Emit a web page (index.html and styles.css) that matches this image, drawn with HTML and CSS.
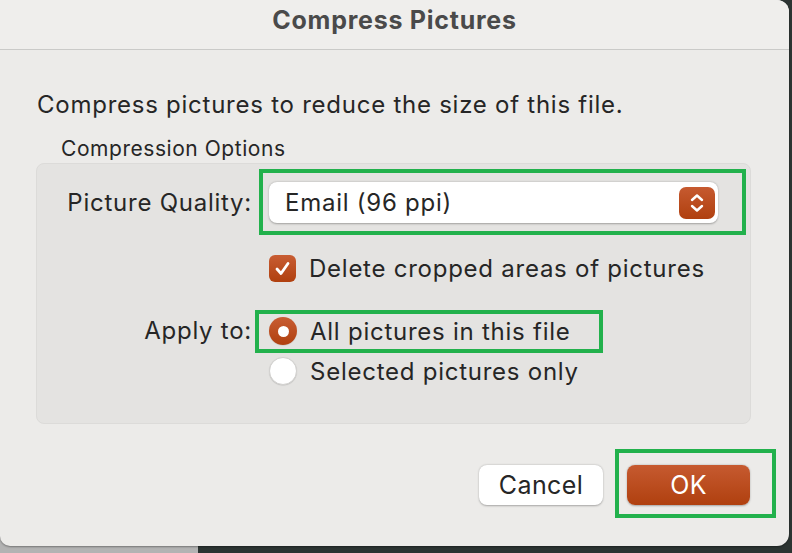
FILE: index.html
```html
<!DOCTYPE html>
<html lang="en">
<head>
  <meta charset="UTF-8" />
  <meta name="viewport" content="width=device-width,initial-scale=1.0"/>
  <title>Compress Pictures</title>
  <link rel="stylesheet" href="styles.css">
</head>
<body>
  <div class="window">
    <div class="titlebar">Compress Pictures</div>
    <div class="content">
      <p class="intro">Compress pictures to reduce the size of this file.</p>
      <div class="group-label">Compression Options</div>
      <div class="group">
        <div class="label">Picture Quality:</div>
        <div class="select mark mark-select">
          <span>Email (96 ppi)</span>
          <span class="stepper">
            <svg width="16" height="22" viewBox="0 0 16 22"><path d="M3 8 L8 3.5 L13 8 M3 14 L8 18.5 L13 14" fill="none" stroke="#fff" stroke-width="2.4" stroke-linecap="round" stroke-linejoin="round"/></svg>
          </span>
        </div>

        <div></div>
        <div class="option check-row">
          <span class="checkbox">
            <svg width="19" height="19" viewBox="0 0 19 19"><path d="M4 10 L8 14.5 L15 4.5" fill="none" stroke="#fff" stroke-width="2.8" stroke-linecap="round" stroke-linejoin="round"/></svg>
          </span>
          <span>Delete cropped areas of pictures</span>
        </div>

        <div class="label apply">Apply to:</div>
        <div class="radios">
          <div class="option mark mark-radio">
            <span class="radio on"></span>
            <span>All pictures in this file</span>
          </div>
          <div class="option">
            <span class="radio"></span>
            <span>Selected pictures only</span>
          </div>
        </div>
      </div>
      <div class="buttons">
        <button class="btn">Cancel</button>
        <button class="btn primary mark mark-ok">OK</button>
      </div>
    </div>
  </div>
</body>
</html>
```

FILE: styles.css
```css
html, body {
  margin: 0;
  height: 100%;
}
body {
  font-family: "Inter", "Liberation Sans", sans-serif;
  color: #262626;
  background: linear-gradient(to right, #b3b3b3 198px, #2c3432 198px);
  overflow: hidden;
}
.window {
  width: 789px;
  height: 546px;
  background: #ecebe9;
  border-radius: 0 12px 12px 10px;
  box-shadow: 0 1px 2px rgba(0,0,0,0.35);
  overflow: hidden;
}
.titlebar {
  height: 49px;
  border-bottom: 1px solid #cacac8;
  background: #efeeec;
  text-align: center;
  line-height: 40px;
  font-size: 25px;
  font-weight: 700;
  color: #4a4a4a;
  letter-spacing: 0.75px;
}
.content {
  padding: 0 38px 0 36px;
}
.intro {
  margin: 41px 0 0 1px;
  font-size: 24px;
  line-height: 28px;
  letter-spacing: 0.75px;
}
.group-label {
  margin: 18px 0 2px 25px;
  font-size: 21px;
  line-height: 24px;
  letter-spacing: 0.55px;
}
.group {
  display: grid;
  grid-template-columns: 215px 1fr;
  column-gap: 17px;
  align-items: start;
  padding: 18px 32px 38px 0;
  background: #e4e3e1;
  border: 1px solid #dcdbd9;
  border-radius: 8px;
}
.label {
  text-align: right;
  font-size: 24px;
  line-height: 41px;
  letter-spacing: 0.75px;
}
.label.apply {
  line-height: 28px;
}
.select {
  display: flex;
  align-items: center;
  justify-content: space-between;
  height: 41px;
  padding: 0 3px 0 16px;
  background: #fff;
  border-radius: 8px;
  box-shadow: 0 0.5px 2px rgba(0,0,0,0.3);
  font-size: 24px;
  letter-spacing: 0.75px;
}
.stepper {
  display: flex;
  align-items: center;
  justify-content: center;
  width: 36px;
  height: 32px;
  border-radius: 7px;
  background: linear-gradient(#c65a30, #b0400f);
}
.option {
  display: flex;
  align-items: center;
  gap: 13px;
  height: 28px;
  font-size: 24px;
  letter-spacing: 0.75px;
}
.check-row {
  grid-column: 2;
  margin: 31px 0 35px;
}
.checkbox {
  display: flex;
  align-items: center;
  justify-content: center;
  width: 27px;
  height: 27px;
  border-radius: 6px;
  background: linear-gradient(#c85d33, #b0400f);
}
.radios {
  display: flex;
  flex-direction: column;
  gap: 12px;
}
.radio {
  box-sizing: border-box;
  width: 28px;
  height: 28px;
  border-radius: 50%;
  background: #fff;
  border: 1px solid #d2d1cf;
  box-shadow: 0 0.5px 1px rgba(0,0,0,0.15);
  display: flex;
  align-items: center;
  justify-content: center;
}
.radio.on {
  border: none;
  background: linear-gradient(#c85d33, #b0400f);
}
.radio.on::before {
  content: "";
  width: 11px;
  height: 11px;
  border-radius: 50%;
  background: #fff;
}
.buttons {
  display: flex;
  justify-content: flex-end;
  gap: 24px;
  margin-top: 41px;
  padding-right: 1px;
}
.btn {
  width: 124px;
  height: 40px;
  border: none;
  border-radius: 8px;
  background: #fff;
  box-shadow: 0 0.5px 2px rgba(0,0,0,0.3);
  font-family: inherit;
  font-size: 25px;
  letter-spacing: 0.4px;
  color: #262626;
}
.btn.primary {
  width: 123px;
  color: #fff;
  background: linear-gradient(#c65a30, #b0400f);
}

/* green annotation boxes drawn over the controls */
.mark {
  position: relative;
}
.mark::after {
  content: "";
  position: absolute;
  border: 4px solid #22b14c;
  pointer-events: none;
}
.mark-select::after {
  inset: -13px -28px -12px -10px;
}
.mark-radio::after {
  top: -7px;
  left: -14px;
  width: 340px;
  height: 35px;
}
.mark-ok::after {
  inset: -16px -26px -13px -12px;
}
```
